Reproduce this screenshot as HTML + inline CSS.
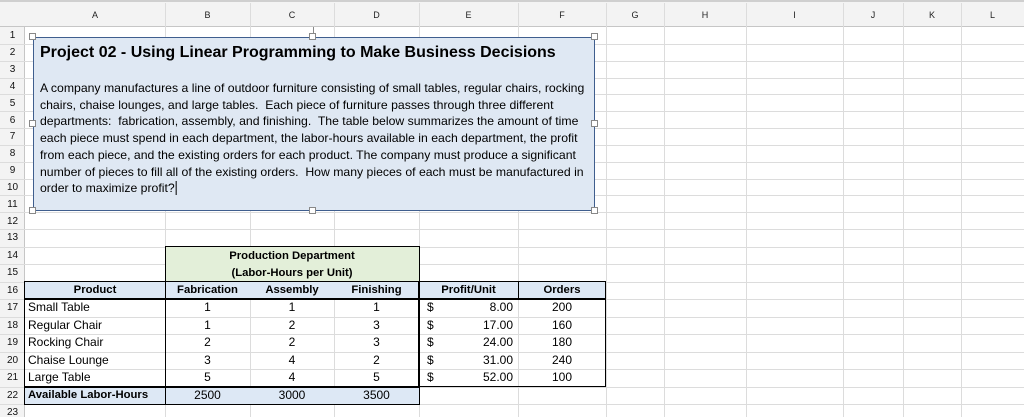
<!DOCTYPE html>
<html><head><meta charset="utf-8"><style>
*{margin:0;padding:0;box-sizing:border-box}
body{width:1024px;height:417px;overflow:hidden;background:#fff;position:relative;font-family:"Liberation Sans",Arial,sans-serif;color:#000}
.a{position:absolute}
.v{position:absolute;top:3px;bottom:0;width:1px;background:#dcdcdc}
.h{position:absolute;left:0;right:0;height:1px;background:#dcdcdc}
.ch{position:absolute;top:3px;height:24px;line-height:24px;text-align:center;font-size:9px;color:#222}
.rn{position:absolute;left:0;width:25px;text-align:center;font-size:10px;color:#111}
.c{position:absolute;font-size:12px;white-space:nowrap;height:17px;line-height:17px}
.b{font-weight:bold;font-size:11.3px}
.hd{position:absolute;width:7px;height:7px;background:#fff;border:1px solid #888}
.bx{position:absolute;border:1.5px solid #000}
</style></head><body>
<div class="a" style="left:0;top:0;width:1024px;height:27px;background:#f3f3f3;border-top:2px solid #cfcfcf;border-bottom:1px solid #c6c6c6"></div>
<div class="a" style="left:0;top:27px;width:25px;height:390px;background:#f3f3f3;border-right:1px solid #c6c6c6"></div>
<div class="v" style="left:165px"></div><div class="v" style="left:250px"></div><div class="v" style="left:334px"></div><div class="v" style="left:419px"></div><div class="v" style="left:518px"></div><div class="v" style="left:606px"></div><div class="v" style="left:664px"></div><div class="v" style="left:746px"></div><div class="v" style="left:843px"></div><div class="v" style="left:903px"></div><div class="v" style="left:961px"></div>
<div class="h" style="top:43.8px"></div><div class="h" style="top:60.7px"></div><div class="h" style="top:77.5px"></div><div class="h" style="top:94.3px"></div><div class="h" style="top:111.2px"></div><div class="h" style="top:128px"></div><div class="h" style="top:144.8px"></div><div class="h" style="top:161.7px"></div><div class="h" style="top:178.5px"></div><div class="h" style="top:195.3px"></div><div class="h" style="top:212.2px"></div><div class="h" style="top:229px"></div><div class="h" style="top:246.5px"></div><div class="h" style="top:264px"></div><div class="h" style="top:281.5px"></div><div class="h" style="top:299px"></div><div class="h" style="top:316.5px"></div><div class="h" style="top:334px"></div><div class="h" style="top:351.5px"></div><div class="h" style="top:369px"></div><div class="h" style="top:386.5px"></div><div class="h" style="top:404px"></div>
<div class="ch" style="left:25px;width:140px">A</div><div class="ch" style="left:165px;width:85px">B</div><div class="ch" style="left:250px;width:84px">C</div><div class="ch" style="left:334px;width:85px">D</div><div class="ch" style="left:419px;width:99px">E</div><div class="ch" style="left:518px;width:88px">F</div><div class="ch" style="left:606px;width:58px">G</div><div class="ch" style="left:664px;width:82px">H</div><div class="ch" style="left:746px;width:97px">I</div><div class="ch" style="left:843px;width:60px">J</div><div class="ch" style="left:903px;width:58px">K</div><div class="ch" style="left:961px;width:63px">L</div>
<div class="rn" style="top:30px">1</div><div class="rn" style="top:47px">2</div><div class="rn" style="top:64px">3</div><div class="rn" style="top:81px">4</div><div class="rn" style="top:98px">5</div><div class="rn" style="top:115px">6</div><div class="rn" style="top:131px">7</div><div class="rn" style="top:148px">8</div><div class="rn" style="top:165px">9</div><div class="rn" style="top:182px">10</div><div class="rn" style="top:199px">11</div><div class="rn" style="top:216px">12</div><div class="rn" style="top:232px">13</div><div class="rn" style="top:250px">14</div><div class="rn" style="top:267px">15</div><div class="rn" style="top:285px">16</div><div class="rn" style="top:302px">17</div><div class="rn" style="top:320px">18</div><div class="rn" style="top:337px">19</div><div class="rn" style="top:355px">20</div><div class="rn" style="top:372px">21</div><div class="rn" style="top:390px">22</div><div class="rn" style="top:407px">23</div>
<div class="a" style="left:165px;top:246.5px;width:254px;height:35px;background:#e3efd9"></div>
<div class="a" style="left:25px;top:281.5px;width:394px;height:17.5px;background:#dde8f5"></div>
<div class="a" style="left:419px;top:281.5px;width:187px;height:17.5px;background:#dde8f5"></div>
<div class="a" style="left:25px;top:386.5px;width:394px;height:17.5px;background:#dde8f5"></div>
<div class="bx" style="left:165px;top:246px;width:255px;height:36px"></div>
<div class="bx" style="left:24px;top:281px;width:396px;height:124px"></div>
<div class="a" style="left:24px;top:298px;width:396px;height:1.5px;background:#000"></div>
<div class="a" style="left:24px;top:386px;width:396px;height:1.5px;background:#000"></div>
<div class="a" style="left:164.5px;top:281px;width:1.5px;height:124px;background:#000"></div>
<div class="bx" style="left:418px;top:281px;width:188px;height:106px"></div>
<div class="a" style="left:418px;top:298px;width:188px;height:1.5px;background:#000"></div>
<div class="a" style="left:517.5px;top:281px;width:1.5px;height:18px;background:#000"></div>
<div class="c b" style="left:165px;top:248px;width:254px;text-align:center">Production Department</div>
<div class="c b" style="left:165px;top:265px;width:254px;text-align:center">(Labor-Hours per Unit)</div>
<div class="c b" style="left:25px;top:282px;width:140px;text-align:center">Product</div>
<div class="c b" style="left:165px;top:282px;width:85px;text-align:center">Fabrication</div>
<div class="c b" style="left:250px;top:282px;width:84px;text-align:center">Assembly</div>
<div class="c b" style="left:334px;top:282px;width:85px;text-align:center">Finishing</div>
<div class="c b" style="left:419px;top:282px;width:99px;text-align:center">Profit/Unit</div>
<div class="c b" style="left:518px;top:282px;width:88px;text-align:center">Orders</div>
<div class="c" style="left:28px;top:299px">Small Table</div>
<div class="c" style="left:28px;top:317px">Regular Chair</div>
<div class="c" style="left:28px;top:334px">Rocking Chair</div>
<div class="c" style="left:28px;top:352px">Chaise Lounge</div>
<div class="c" style="left:28px;top:369px">Large Table</div>
<div class="c b" style="left:28px;top:387px">Available Labor-Hours</div>
<div class="c" style="left:165px;top:299px;width:85px;text-align:center">1</div><div class="c" style="left:250px;top:299px;width:84px;text-align:center">1</div><div class="c" style="left:334px;top:299px;width:85px;text-align:center">1</div>
<div class="c" style="left:165px;top:317px;width:85px;text-align:center">1</div><div class="c" style="left:250px;top:317px;width:84px;text-align:center">2</div><div class="c" style="left:334px;top:317px;width:85px;text-align:center">3</div>
<div class="c" style="left:165px;top:334px;width:85px;text-align:center">2</div><div class="c" style="left:250px;top:334px;width:84px;text-align:center">2</div><div class="c" style="left:334px;top:334px;width:85px;text-align:center">3</div>
<div class="c" style="left:165px;top:352px;width:85px;text-align:center">3</div><div class="c" style="left:250px;top:352px;width:84px;text-align:center">4</div><div class="c" style="left:334px;top:352px;width:85px;text-align:center">2</div>
<div class="c" style="left:165px;top:369px;width:85px;text-align:center">5</div><div class="c" style="left:250px;top:369px;width:84px;text-align:center">4</div><div class="c" style="left:334px;top:369px;width:85px;text-align:center">5</div>
<div class="c" style="left:165px;top:387px;width:85px;text-align:center">2500</div><div class="c" style="left:250px;top:387px;width:84px;text-align:center">3000</div><div class="c" style="left:334px;top:387px;width:85px;text-align:center">3500</div>
<div class="c" style="left:427px;top:299px">$</div><div class="c" style="left:427px;top:317px">$</div><div class="c" style="left:427px;top:334px">$</div><div class="c" style="left:427px;top:352px">$</div><div class="c" style="left:427px;top:369px">$</div>
<div class="c" style="left:440px;top:299px;width:73px;text-align:right">8.00</div>
<div class="c" style="left:440px;top:317px;width:73px;text-align:right">17.00</div>
<div class="c" style="left:440px;top:334px;width:73px;text-align:right">24.00</div>
<div class="c" style="left:440px;top:352px;width:73px;text-align:right">31.00</div>
<div class="c" style="left:440px;top:369px;width:73px;text-align:right">52.00</div>
<div class="c" style="left:518px;top:299px;width:88px;text-align:center">200</div>
<div class="c" style="left:518px;top:317px;width:88px;text-align:center">160</div>
<div class="c" style="left:518px;top:334px;width:88px;text-align:center">180</div>
<div class="c" style="left:518px;top:352px;width:88px;text-align:center">240</div>
<div class="c" style="left:518px;top:369px;width:88px;text-align:center">100</div>
<div class="a" style="left:33px;top:37px;width:562px;height:174px;background:#dfe8f3;border:1.5px solid #3f5e8e"></div>
<div class="a" style="left:313px;top:27px;width:1px;height:10px;background:#888"></div>
<div class="a" style="left:40px;top:44px;font-size:16px;font-weight:bold;white-space:nowrap">Project 02 - Using Linear Programming to Make Business Decisions</div>
<div class="a" style="left:40px;top:80px;font-size:12px;line-height:16.7px;white-space:nowrap;transform:scaleX(1.02);transform-origin:left">A company manufactures a line of outdoor furniture consisting of small tables, regular chairs, rocking<br>chairs, chaise lounges, and large tables.&nbsp; Each piece of furniture passes through three different<br>departments:&nbsp; fabrication, assembly, and finishing.&nbsp; The table below summarizes the amount of time<br>each piece must spend in each department, the labor-hours available in each department, the profit<br>from each piece, and the existing orders for each product. The company must produce a significant<br>number of pieces to fill all of the existing orders.&nbsp; How many pieces of each must be manufactured in<br>order to maximize profit?<span style="border-left:1px solid #000;margin-left:1px"></span></div>
<div class="hd" style="left:29px;top:33px"></div><div class="hd" style="left:309px;top:33px"></div><div class="hd" style="left:591px;top:33px"></div>
<div class="hd" style="left:29px;top:120px"></div><div class="hd" style="left:591px;top:120px"></div>
<div class="hd" style="left:29px;top:207px"></div><div class="hd" style="left:309px;top:207px"></div><div class="hd" style="left:591px;top:207px"></div>
</body></html>
